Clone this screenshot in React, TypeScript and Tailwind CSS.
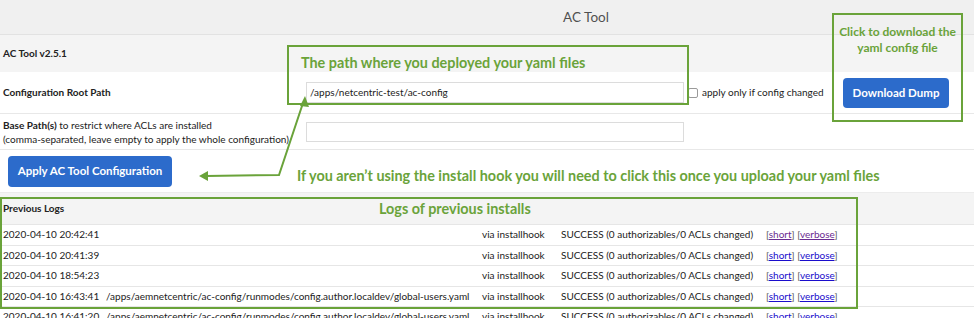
const GREEN = "text-[#6aa33a]";

const LOGS = [
  { date: "2020-04-10 20:42:41", path: "", visited: true },
  { date: "2020-04-10 20:41:39", path: "", visited: false },
  { date: "2020-04-10 18:54:23", path: "", visited: false },
  {
    date: "2020-04-10 16:43:41",
    path: "/apps/aemnetcentric/ac-config/runmodes/config.author.localdev/global-users.yaml",
    visited: false,
  },
  {
    date: "2020-04-10 16:41:20",
    path: "/apps/aemnetcentric/ac-config/runmodes/config.author.localdev/global-users.yaml",
    visited: false,
  },
];

function LogRow({ date, path, visited }: { date: string; path: string; visited: boolean }) {
  const link = visited ? "text-[#6b2c91]" : "text-[#1a0dcc]";
  return (
    <div className="flex items-center h-[20.5px] border-b border-[#e6e6e6] text-[10px] text-[#222] bg-white whitespace-nowrap">
      <div className="w-[106px] pl-[3px] shrink-0">{date}</div>
      <div className="w-[376px] shrink-0">{path}</div>
      <div className="w-[79px] shrink-0">via installhook</div>
      <div className="w-[205px] shrink-0">SUCCESS (0 authorizables/0 ACLs changed)</div>
      <div className="text-[#555]">
        [<span className={`underline ${link}`}>short</span>] [
        <span className={`underline ${link}`}>verbose</span>]
      </div>
    </div>
  );
}

export default function App() {
  return (
    <div
      className="relative w-[974px] h-[318px] overflow-hidden bg-white text-[#222]"
      style={{ fontFamily: "Lato, 'Open Sans', sans-serif" }}
    >
      {/* header */}
      <div className="h-[35px] bg-[#f0f0f0] border-b border-[#e2e2e2] flex items-center justify-center pl-[198px]">
        <span className="text-[13.5px] text-[#505050]">AC Tool</span>
      </div>

      {/* version row */}
      <div className="h-[37px] bg-[#f4f4f4] flex items-center pl-[3px]">
        <span className="text-[10px] font-bold">AC Tool v2.5.1</span>
      </div>

      {/* configuration root path */}
      <div className="h-[42px] flex items-center border-b border-[#e8e8e8] whitespace-nowrap">
        <div className="w-[306px] pl-[3px] text-[10px] font-bold">Configuration Root Path</div>
        <div className="w-[378px] h-[21px] border border-[#dcdcdc] flex items-center pl-[3px] text-[10px]">
          /apps/netcentric-test/ac-config
        </div>
        <div className="ml-[4px] w-[10px] h-[10px] border border-[#9a9a9a] rounded-[2px] bg-white" />
        <span className="ml-[4px] text-[10px]">apply only if config changed</span>
        <button className="ml-auto mr-[25px] w-[106px] h-[30px] rounded-[4px] bg-[#2c6bcb] text-white text-[11.5px] font-bold">
          Download Dump
        </button>
      </div>

      {/* base paths */}
      <div className="h-[36px] flex items-center border-b border-[#e8e8e8]">
        <div className="w-[306px] pl-[3px] text-[10px] leading-[14px] whitespace-nowrap">
          <span className="font-bold">Base Path(s)</span> to restrict where ACLs are installed
          <br />
          (comma-separated, leave empty to apply the whole configuration)
        </div>
        <div className="w-[378px] h-[20px] border border-[#dcdcdc]" />
      </div>

      {/* apply button */}
      <div className="h-[43px] flex items-center pl-[8px] border-b border-[#ececec]">
        <button className="w-[164px] h-[31px] rounded-[4px] bg-[#2c6bcb] text-white text-[11.5px] font-bold">
          Apply AC Tool Configuration
        </button>
      </div>

      {/* previous logs */}
      <div className="h-[32px] bg-[#f4f4f4] flex items-center pl-[3px] border-b border-[#e6e6e6]">
        <span className="text-[10px] font-bold">Previous Logs</span>
      </div>
      {LOGS.map((l) => (
        <LogRow key={l.date} {...l} />
      ))}

      {/* annotations */}
      <div className="absolute left-[287px] top-[45px] w-[402px] h-[60px] border-2 border-[#6aa33a] pt-[3px] pl-[12px]">
        <span className={`text-[14.4px] font-bold ${GREEN}`}>The path where you deployed your yaml files</span>
      </div>
      <div className="absolute left-[832px] top-[13px] w-[131px] h-[109px] border-2 border-[#6aa33a] pt-[9px] text-center">
        <div className={`text-[12px] font-bold leading-[16px] ${GREEN}`}>
          Click to download the
          <br />
          yaml config file
        </div>
      </div>
      <div className="absolute left-0 top-[197px] w-[858px] h-[112px] border-2 border-[#6aa33a] pointer-events-none">
        <div className={`absolute left-[377px] top-[-1px] text-[14.4px] font-bold ${GREEN}`}>
          Logs of previous installs
        </div>
      </div>
      <div className={`absolute left-[297px] top-[165px] text-[14.4px] font-bold whitespace-nowrap ${GREEN}`}>
        If you aren’t using the install hook you will need to click this once you upload your yaml files
      </div>
      <svg className="absolute left-0 top-0" width="974" height="318">
        <polyline points="206,176 279,175 303,103" fill="none" stroke="#6aa33a" strokeWidth="2" />
        <polygon points="199,176 208,171 208,181" fill="#6aa33a" />
        <polygon points="305,96 300,106 309,107" fill="#6aa33a" />
      </svg>
    </div>
  );
}
